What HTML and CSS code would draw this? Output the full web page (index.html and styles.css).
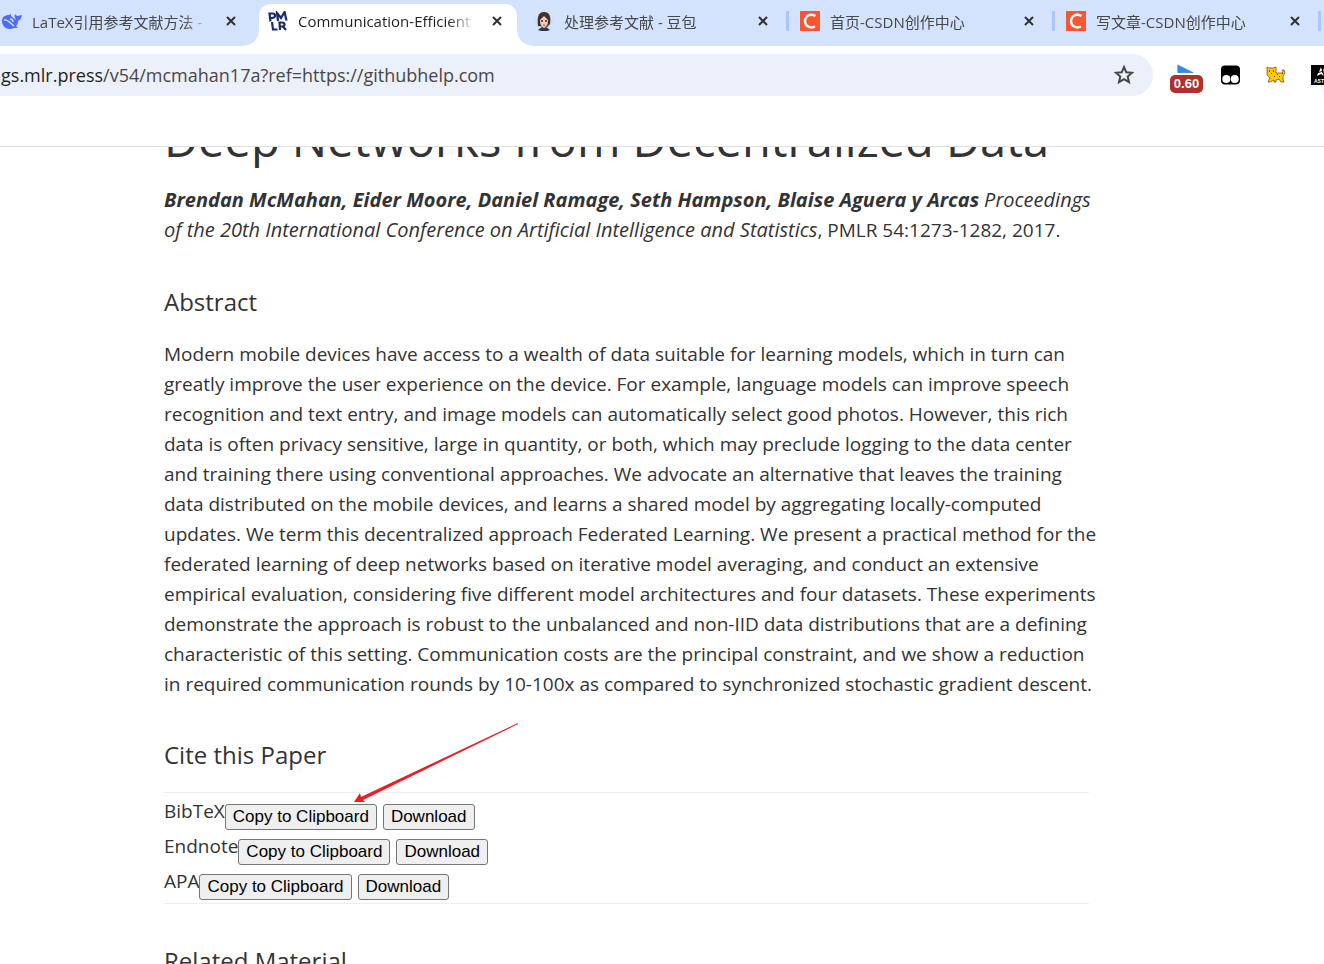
FILE: index.html
```
<!DOCTYPE html>
<html lang="en">
<head>
    <meta charset="UTF-8">
    <meta name="viewport" content="width=device-width, initial-scale=1.0">
    <title>Communication-Efficient Learning of Deep Networks from Decentralized Data</title>
    <link rel="stylesheet" href="styles.css">
</head>
<body>
    <nav class="tabs">
        <div class="tab">
            <svg class="tab-icon" viewBox="0 0 20 20"><path fill="#4d6bfe" d="M0 10C0 6 3 4 7 4l2-1v2c2 1 3 3 5 4-1-2-2-4-1-6l2 2 5-1c-1 4-2 5-4 6 0 3-1 4-2 5l2 2-4 0C6 20 0 16 0 10z"/><path fill="none" stroke="#d3e3fd" stroke-width="1.400" d="M2 9c4-1 6 3 10 6M8 8c2 0 3 1 3 3"/></svg>
            <a class="tab-title" href="#">LaTeX引用参考文献方法 - </a>
            <button class="tab-close" aria-label="Close tab"><svg viewBox="0 0 10 10"><path d="M1 1l8 8M9 1L1 9"/></svg></button>
        </div>
        <span class="sep"></span>
        <div class="tab active">
            <svg class="tab-icon" viewBox="0 0 20 20"><g fill="none" stroke="#1b2a6b" stroke-width="2.2"><path d="M2.500 10.500L1.500 2.500h3q2.500 0 2.500 2t-2.500 2.500H2.500M10 10L9 2l4 5 3.500-6 2 8.500M4 11l1 7.500h4.500M12 19l-.5-7.500h2.500q2.500 0 2.500 2t-2.500 2H12M14.500 15l3.500 4"/></g></svg>
            <a class="tab-title" href="#">Communication-Efficient Learning</a>
            <button class="tab-close" aria-label="Close tab"><svg viewBox="0 0 10 10"><path d="M1 1l8 8M9 1L1 9"/></svg></button>
        </div>
        <span class="sep"></span>
        <div class="tab">
            <svg class="tab-icon" viewBox="0 0 20 20"><circle cx="10" cy="10" r="9" fill="#c5e5f6"/><path fill="#44302e" d="M4 15C3 7 4 1 10 1s7 5 6 12l-3 3z"/><path fill="#f5cbb9" d="M6 9l4-4 4 4c0 4-1 7-4 7s-4-3-4-7z"/><path fill="#303a42" d="M4 19l4-3 2 1 2-1 4 3-3 1H7z"/><circle cx="8" cy="10" r="1" fill="#44302e"/><circle cx="12" cy="10" r="1" fill="#44302e"/><path stroke="#c5504d" d="M9 14h2"/></svg>
            <a class="tab-title" href="#">处理参考文献 - 豆包</a>
            <button class="tab-close" aria-label="Close tab"><svg viewBox="0 0 10 10"><path d="M1 1l8 8M9 1L1 9"/></svg></button>
        </div>
        <span class="sep line"></span>
        <div class="tab">
            <svg class="tab-icon" viewBox="0 0 20 20"><path fill="#fc5531" d="M0 0h20v20H0z"/><path fill="none" stroke="#fff" stroke-width="2.4" d="M15.500 5C10 2 5 5 5 10c0 5 5 8 10 5.500"/></svg>
            <a class="tab-title" href="#">首页-CSDN创作中心</a>
            <button class="tab-close" aria-label="Close tab"><svg viewBox="0 0 10 10"><path d="M1 1l8 8M9 1L1 9"/></svg></button>
        </div>
        <span class="sep line"></span>
        <div class="tab">
            <svg class="tab-icon" viewBox="0 0 20 20"><path fill="#fc5531" d="M0 0h20v20H0z"/><path fill="none" stroke="#fff" stroke-width="2.4" d="M15.500 5C10 2 5 5 5 10c0 5 5 8 10 5.500"/></svg>
            <a class="tab-title" href="#">写文章-CSDN创作中心</a>
            <button class="tab-close" aria-label="Close tab"><svg viewBox="0 0 10 10"><path d="M1 1l8 8M9 1L1 9"/></svg></button>
        </div>
        <span class="sep line"></span>
    </nav>

    <div class="toolbar">
        <div class="address">
            <a class="url" href="#"><span class="host">ngs.mlr.press</span>/v54/mcmahan17a?ref=https://githubhelp.com</a>
            <button class="star" aria-label="Bookmark this page"><svg viewBox="0 0 22 22"><path d="M11 3l2.300 5.300 5.700.5-4.300 3.800 1.300 5.600-5-3-5 3 1.300-5.600L3 8.800l5.700-.5z"/></svg></button>
        </div>
        <div class="extensions">
            <button class="ext speed" aria-label="Playback speed"><svg viewBox="0 0 34 28"><path fill="#1e90ff" stroke="#55606b" stroke-width=".5" d="M8 4l16 8H8z"/></svg><span class="badge">0.60</span></button>
            <button class="ext" aria-label="Tampermonkey"><svg viewBox="0 0 20 20"><rect y="0.500" width="19" height="19" rx="4"/><circle cx="5.300" cy="14" r="4" fill="#fff"/><circle cx="13.700" cy="14" r="4" fill="#fff"/></svg></button>
            <button class="ext" aria-label="Cat"><svg viewBox="0 0 20 20"><path fill="#fc0" stroke="#8a4a16" stroke-width=".8" d="M1 2l2 1h4l3-1v6h6l1-1-1-2h2l1 3-2 3v3l1 3h-3l-2-3-3 1v2H8v-2l-4 2H2l2-4-3-3z"/><path fill="#7d2857" d="M3 5h1v2H3zM7 5h1v2H7zM5 8h1v1H5zM8 11h1v1H8zM11 9h1v1h-1zM13 11h1v1h-1zM16 8h1v1h-1z"/></svg></button>
            <button class="ext" aria-label="AST"><svg viewBox="0 0 20 20"><path d="M0 0h20v20H0z"/><path fill="#fff" d="M10 2l1 4-3 1zM7 8l4-1 2 4-3-2-4 2zM12 3l4 8-3-2z"/><text class="ext-label" x="3" y="18">AST</text></svg></button>
        </div>
    </div>

    <header class="site-header"></header>

    <main class="page">
        <article class="wrapper">
            <h1>Deep Networks from Decentralized Data</h1>
            <p class="info">
                <b><i>Brendan McMahan, Eider Moore, Daniel Ramage, Seth Hampson, Blaise Aguera y Arcas</i></b> <i>Proceedings<br>
                of the 20th International Conference on Artificial Intelligence and Statistics</i>, PMLR 54:1273-1282, 2017.
            </p>

            <h2>Abstract</h2>
            <p class="abstract">
                Modern mobile devices have access to a wealth of data suitable for learning models, which in turn can<br>
                greatly improve the user experience on the device. For example, language models can improve speech<br>
                recognition and text entry, and image models can automatically select good photos. However, this rich<br>
                data is often privacy sensitive, large in quantity, or both, which may preclude logging to the data center<br>
                and training there using conventional approaches. We advocate an alternative that leaves the training<br>
                data distributed on the mobile devices, and learns a shared model by aggregating locally-computed<br>
                updates. We term this decentralized approach Federated Learning. We present a practical method for the<br>
                federated learning of deep networks based on iterative model averaging, and conduct an extensive<br>
                empirical evaluation, considering five different model architectures and four datasets. These experiments<br>
                demonstrate the approach is robust to the unbalanced and non-IID data distributions that are a defining<br>
                characteristic of this setting. Communication costs are the principal constraint, and we show a reduction<br>
                in required communication rounds by 10-100x as compared to synchronized stochastic gradient descent.
            </p>

            <h2>Cite this Paper</h2>
            <div class="cite">
                <div class="cite-row">
                    <span>BibTeX</span>
                    <button class="button">Copy to Clipboard</button>
                    <button class="button">Download</button>
                </div>
                <div class="cite-row">
                    <span>Endnote</span>
                    <button class="button">Copy to Clipboard</button>
                    <button class="button">Download</button>
                </div>
                <div class="cite-row">
                    <span>APA</span>
                    <button class="button">Copy to Clipboard</button>
                    <button class="button">Download</button>
                </div>
                <svg class="arrow" viewBox="0 0 166 80"><path fill="#ed1c24" d="M164 0v1L9 77l2 2L0 79l6-9 1 4z"/></svg>
            </div>

            <h2>Related Material</h2>
        </article>
    </main>
</body>
</html>
```
FILE: styles.css
```
* {
    box-sizing: border-box;
}
body {
    margin: 0;
    height: 100vh;
    display: flex;
    flex-direction: column;
    overflow: hidden;
    background: #fff;
    color: #333;
    font-family: "Open Sans", "Noto Sans CJK SC", sans-serif;
}
a {
    color: inherit;
    text-decoration: none;
}
button {
    cursor: pointer;
}

/* tab strip */
.tabs {
    display: flex;
    flex: none;
    height: 46px;
    padding-top: 4px;
    margin-left: -7px;
    background: #d3e3fd;
    overflow: hidden;
}
.tab {
    position: relative;
    display: flex;
    flex: 0 0 258px;
    min-width: 0;
    align-items: center;
    padding: 0 10px 8px 9px;
    font-size: 15px;
    color: #474747;
}
.tab.active {
    background: #fff;
    border-radius: 12px 12px 0 0;
    color: #1f1f1f;
}
.tab.active::before,
.tab.active::after {
    content: "";
    position: absolute;
    bottom: 0;
    width: 15px;
    height: 15px;
}
.tab.active::before {
    right: 100%;
    background: radial-gradient(circle at 0 0, transparent 14px, #fff 15px);
}
.tab.active::after {
    left: 100%;
    background: radial-gradient(circle at 100% 0, transparent 14px, #fff 15px);
}
.tab-icon {
    flex: none;
    width: 20px;
    height: 20px;
}
.tab-title {
    flex: 1;
    min-width: 0;
    margin-left: 10px;
    overflow: hidden;
    white-space: nowrap;
    mask-image: linear-gradient(to right, #000 150px, transparent 178px);
}
.tab-close {
    flex: none;
    width: 20px;
    height: 20px;
    padding: 5px;
    border: none;
    background: none;
}
.tab-close svg {
    display: block;
    width: 10px;
    height: 10px;
    fill: none;
    stroke: #303030;
    stroke-width: 2;
}
.sep {
    flex: 0 0 8px;
    height: 34px;
    display: flex;
    align-items: center;
    justify-content: center;
}
.sep.line::before {
    content: "";
    width: 3px;
    height: 20px;
    border-radius: 1px;
    background: #a8c7fa;
}

/* address bar */
.toolbar {
    display: flex;
    flex: none;
    padding-top: 8px;
}
.address {
    display: flex;
    flex: 1;
    align-items: center;
    justify-content: space-between;
    height: 42px;
    padding-right: 18px;
    border-radius: 0 21px 21px 0;
    background: #ecf0fa;
}
.url {
    margin-left: -10px;
    font-size: 18px;
    color: #474747;
}
.host {
    color: #1f1f1f;
}
.star {
    width: 22px;
    height: 22px;
    padding: 0;
    border: none;
    background: none;
}
.star svg {
    display: block;
    fill: none;
    stroke: #474747;
    stroke-width: 2;
}
.extensions {
    display: flex;
    flex: 0 0 171px;
    align-items: center;
    gap: 25px;
    padding-left: 17px;
    overflow: hidden;
}
.ext {
    flex: none;
    width: 20px;
    height: 20px;
    padding: 0;
    border: none;
    background: none;
}
.ext svg {
    display: block;
}
.ext-label {
    fill: #fff;
    font-size: 5px;
    font-weight: bold;
}
.speed {
    position: relative;
    width: 33px;
    height: 28px;
    margin-right: -7px;
}
.badge {
    position: absolute;
    left: 0;
    bottom: -4px;
    width: 33px;
    border-radius: 5px;
    background: #b03030;
    color: #fff;
    font-size: 13px;
    font-weight: bold;
    line-height: 18px;
    text-align: center;
}

/* paper */
.site-header {
    flex: none;
    height: 51px;
    border-bottom: 1px solid #e0e0e0;
}
.page {
    flex: 1;
    min-height: 0;
    overflow: hidden;
}
.wrapper {
    margin: -38px 235px 0 164px;
    font-size: 19px;
    line-height: 30px;
}
h1 {
    margin: 0 0 16px;
    font-size: 47px;
    font-weight: normal;
    line-height: 60px;
    white-space: nowrap;
}
h2 {
    margin: 0 0 20px;
    font-size: 24px;
    font-weight: normal;
    line-height: 34px;
}
p {
    margin: 0;
    white-space: nowrap;
}
.info {
    margin-bottom: 40px;
}
.info i {
    font-size: 20px;
}
.abstract {
    margin-bottom: 39px;
}
.cite {
    position: relative;
    margin-bottom: 40px;
    padding: 3px 0 2px;
    border-top: 1px solid #eee;
    border-bottom: 1px solid #eee;
}
.cite-row {
    display: flex;
    align-items: flex-start;
    height: 35px;
}
.button {
    height: 26px;
    margin: 8px 6px 0 0;
    padding: 0 7px;
    border: 1px solid #767676;
    border-radius: 3px;
    background: #efefef;
    color: #000;
    font-family: "Liberation Sans", Arial, sans-serif;
    font-size: 17px;
}
.arrow {
    position: absolute;
    left: 190px;
    top: -70px;
    width: 166px;
    height: 80px;
    pointer-events: none;
}
```
